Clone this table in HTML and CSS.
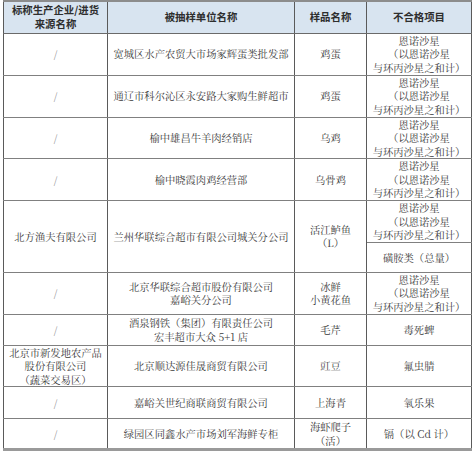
FILE: index.html
```html
<!DOCTYPE html>
<html lang="zh-CN">
<head>
<meta charset="utf-8">
<link rel="stylesheet" href="styles.css">
</head>
<body>
<div class="wrap">
<table class="tbl">
  <colgroup>
    <col class="c1"><col class="c2"><col class="c3"><col class="c4">
  </colgroup>
  <thead>
    <tr class="h-head">
      <th>标称生产企业/进货<br>来源名称</th>
      <th>被抽样单位名称</th>
      <th>样品名称</th>
      <th>不合格项目</th>
    </tr>
  </thead>
  <tbody>
    <tr class="h42">
      <td class="slash">/</td>
      <td>宽城区水产农贸大市场家辉蛋类批发部</td>
      <td>鸡蛋</td>
      <td>恩诺沙星<br>（以恩诺沙星<br>与环丙沙星之和计）</td>
    </tr>
    <tr class="h42">
      <td class="slash">/</td>
      <td>通辽市科尔沁区永安路大家购生鲜超市</td>
      <td>鸡蛋</td>
      <td>恩诺沙星<br>（以恩诺沙星<br>与环丙沙星之和计）</td>
    </tr>
    <tr class="h41">
      <td class="slash">/</td>
      <td>榆中雄昌牛羊肉经销店</td>
      <td>乌鸡</td>
      <td>恩诺沙星<br>（以恩诺沙星<br>与环丙沙星之和计）</td>
    </tr>
    <tr class="h41">
      <td class="slash">/</td>
      <td>榆中晓霞肉鸡经营部</td>
      <td>乌骨鸡</td>
      <td>恩诺沙星<br>（以恩诺沙星<br>与环丙沙星之和计）</td>
    </tr>
    <tr class="h40">
      <td rowspan="2">北方渔夫有限公司</td>
      <td rowspan="2">兰州华联综合超市有限公司城关分公司</td>
      <td rowspan="2">活江鲈鱼<br>（L）</td>
      <td>恩诺沙星<br>（以恩诺沙星<br>与环丙沙星之和计）</td>
    </tr>
    <tr class="h30">
      <td>磺胺类（总量）</td>
    </tr>
    <tr class="h40">
      <td class="slash">/</td>
      <td>北京华联综合超市股份有限公司<br>嘉峪关分公司</td>
      <td>冰鲜<br>小黄花鱼</td>
      <td>恩诺沙星<br>（以恩诺沙星<br>与环丙沙星之和计）</td>
    </tr>
    <tr class="h31">
      <td class="slash">/</td>
      <td>酒泉钢铁（集团）有限责任公司<br>宏丰超市大众 5+1 店</td>
      <td>毛芹</td>
      <td>毒死蜱</td>
    </tr>
    <tr class="h41">
      <td>北京市新发地农产品<br>股份有限公司<br>（蔬菜交易区）</td>
      <td>北京顺达源佳晟商贸有限公司</td>
      <td>豇豆</td>
      <td>氟虫腈</td>
    </tr>
    <tr class="h32">
      <td class="slash">/</td>
      <td>嘉峪关世纪商联商贸有限公司</td>
      <td>上海青</td>
      <td>氧乐果</td>
    </tr>
    <tr class="h31">
      <td class="slash">/</td>
      <td>绿园区同鑫水产市场刘军海鲜专柜</td>
      <td>海虾爬子<br>（活）</td>
      <td>镉（以 Cd 计）</td>
    </tr>
  </tbody>
</table>
</div>
</body>
</html>
```
FILE: styles.css
```css
html, body {
  margin: 0;
  padding: 0;
  background: #ffffff;
}
.wrap {
  padding: 0 0 0 3px;
}
.tbl {
  border-collapse: collapse;
  table-layout: fixed;
  width: 469px;
  border-top: 2px solid #8c8c8c;
  border-bottom: 3px solid #9a9a9a;
  font-family: "Noto Serif CJK SC", "Noto Sans CJK SC", serif;
  font-size: 10.3px;
  line-height: 13.6px;
  color: #3a3a3a;
}
.c1 { width: 104px; }
.c2 { width: 187px; }
.c3 { width: 72px; }
.c4 { width: 105px; }
.tbl th,
.tbl td {
  border-left: 1px solid #5a5a5a;
  border-right: 1px solid #5a5a5a;
  border-bottom: 1px solid #808080;
  padding: 0 2px;
  text-align: center;
  vertical-align: middle;
  white-space: nowrap;
  overflow: hidden;
}
.tbl th {
  background: #d8e4f0;
  font-family: "Noto Sans CJK SC", sans-serif;
  font-weight: 700;
  font-size: 10.4px;
  line-height: 14px;
  color: #2e2e2e;
  border-bottom: 1px solid #6a6a6a;
}
.slash {
  color: #808080;
}
.h-head { height: 32px; }
.h42 { height: 42px; }
.h41 { height: 41px; }
.h40 { height: 40px; }
.h32 { height: 32px; }
.h31 { height: 31px; }
.h30 { height: 30px; }
```
